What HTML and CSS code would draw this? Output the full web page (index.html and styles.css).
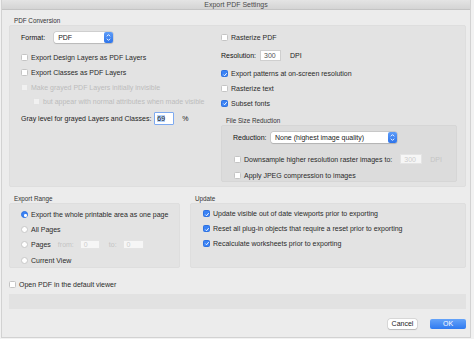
FILE: index.html
```html
<!DOCTYPE html>
<html>
<head>
<meta charset="utf-8">
<link rel="stylesheet" href="styles.css">
</head>
<body>
<div class="window">
  <div class="titlebar">Export PDF Settings</div>
  <div class="content">
    <div class="sec-label first">PDF Conversion</div>
    <div class="group conv">
      <div class="col-left">
        <div class="row format">
          <span class="lbl strong">Format:</span>
          <span class="select sel-format"><span class="sel-text">PDF</span><span class="stepper"><svg viewBox="0 0 9 11" width="9" height="11"><path d="M2.8 4.3 L4.5 2.6 L6.2 4.3 M2.8 6.7 L4.5 8.4 L6.2 6.7" fill="none" stroke="#fff" stroke-width="0.9"/></svg></span></span>
        </div>
        <div class="row r15 mt7"><span class="cb"></span><span class="txt">Export Design Layers as PDF Layers</span></div>
        <div class="row r15"><span class="cb"></span><span class="txt">Export Classes as PDF Layers</span></div>
        <div class="row r14 disabled"><span class="cb"></span><span class="txt">Make grayed PDF Layers initially invisible</span></div>
        <div class="row r14 disabled indent"><span class="cb"></span><span class="txt">but appear with normal attributes when made visible</span></div>
        <div class="row gray">
          <span class="lbl">Gray level for grayed Layers and Classes:</span>
          <span class="input focus"><span class="selected">69</span></span>
          <span class="lbl pct">%</span>
        </div>
      </div>
      <div class="col-right">
        <div class="row r14"><span class="cb"></span><span class="txt">Rasterize PDF</span></div>
        <div class="row r14 mt4 res">
          <span class="lbl strong">Resolution:</span>
          <span class="input res-in">300</span>
          <span class="lbl dpi">DPI</span>
        </div>
        <div class="row r15 mt4"><span class="cb on"><svg viewBox="0 0 7 7" width="7" height="7"><path d="M1.6 3.6 L3 5 L5.5 1.9" fill="none" stroke="#fff" stroke-width="1.1"/></svg></span><span class="txt">Export patterns at on-screen resolution</span></div>
        <div class="row r15"><span class="cb"></span><span class="txt">Rasterize text</span></div>
        <div class="row r14"><span class="cb on"><svg viewBox="0 0 7 7" width="7" height="7"><path d="M1.6 3.6 L3 5 L5.5 1.9" fill="none" stroke="#fff" stroke-width="1.1"/></svg></span><span class="txt">Subset fonts</span></div>
        <div class="sec-label inner-label">File Size Reduction</div>
        <div class="group inner">
          <div class="row reduction">
            <span class="lbl strong red-lbl">Reduction:</span>
            <span class="select sel-red"><span class="sel-text">None (highest image quality)</span><span class="stepper"><svg viewBox="0 0 9 11" width="9" height="11"><path d="M2.8 4.3 L4.5 2.6 L6.2 4.3 M2.8 6.7 L4.5 8.4 L6.2 6.7" fill="none" stroke="#fff" stroke-width="0.9"/></svg></span></span>
          </div>
          <div class="row r14 down">
            <span class="cb"></span><span class="txt">Downsample higher resolution raster images to:</span>
            <span class="input dis-in">300</span>
            <span class="lbl dis-txt dpi2">DPI</span>
          </div>
          <div class="row r14 jpeg"><span class="cb"></span><span class="txt">Apply JPEG compression to images</span></div>
        </div>
      </div>
    </div>

    <div class="bottom-groups">
      <div class="gcol range-col">
        <div class="sec-label second">Export Range</div>
        <div class="group range">
          <div class="row r15"><span class="radio on"></span><span class="txt">Export the whole printable area as one page</span></div>
          <div class="row r15"><span class="radio"></span><span class="txt">All Pages</span></div>
          <div class="row r15">
            <span class="radio"></span><span class="txt">Pages</span>
            <span class="dis-txt from">from:</span><span class="input dis-in pg1">0</span>
            <span class="dis-txt to">to:</span><span class="input dis-in pg2">0</span>
          </div>
          <div class="row r15 mt1"><span class="radio"></span><span class="txt">Current View</span></div>
        </div>
      </div>
      <div class="gcol update-col">
        <div class="sec-label second">Update</div>
        <div class="group update">
          <div class="row r15"><span class="cb on"><svg viewBox="0 0 7 7" width="7" height="7"><path d="M1.6 3.6 L3 5 L5.5 1.9" fill="none" stroke="#fff" stroke-width="1.1"/></svg></span><span class="txt">Update visible out of date viewports prior to exporting</span></div>
          <div class="row r15"><span class="cb on"><svg viewBox="0 0 7 7" width="7" height="7"><path d="M1.6 3.6 L3 5 L5.5 1.9" fill="none" stroke="#fff" stroke-width="1.1"/></svg></span><span class="txt">Reset all plug-in objects that require a reset prior to exporting</span></div>
          <div class="row r14"><span class="cb on"><svg viewBox="0 0 7 7" width="7" height="7"><path d="M1.6 3.6 L3 5 L5.5 1.9" fill="none" stroke="#fff" stroke-width="1.1"/></svg></span><span class="txt">Recalculate worksheets prior to exporting</span></div>
        </div>
      </div>
    </div>

    <div class="row r14 open"><span class="cb"></span><span class="txt">Open PDF in the default viewer</span></div>
    <div class="graybar"></div>
    <div class="buttons">
      <span class="btn cancel">Cancel</span>
      <span class="btn ok">OK</span>
    </div>
  </div>
</div>
</body>
</html>
```
FILE: styles.css
```css
* { box-sizing: border-box; }
html, body { margin: 0; padding: 0; }
body {
  background: #f2f2f2;
  width: 474px;
  height: 339px;
  overflow: hidden;
  font-family: "Liberation Sans", Arial, sans-serif;
  font-size: 7px;
  color: #2a2a2a;
}
.window {
  margin-left: 1px;
  width: 470px;
  height: 338px;
  background: #ececec;
  border-left: 1px solid #d2d2d2;
  border-right: 1px solid #d2d2d2;
  border-bottom: 1px solid #d2d2d2;
}
.titlebar {
  height: 10px;
  line-height: 9px;
  text-align: center;
  background: linear-gradient(#e4e4e4, #d4d4d4);
  border-bottom: 1px solid #c4c4c4;
  color: #4a4a4a;
  font-size: 7px;
}
.content {
  padding: 0 3px 0 7px;
}
.sec-label {
  height: 9px;
  line-height: 9px;
  font-size: 6.3px;
  color: #333;
  padding-left: 5px;
}
.sec-label.first { margin-top: 6px; }
.sec-label.second { margin-top: 7px; }
.group {
  background: #e3e3e3;
  border: 1px solid #dedede;
  border-radius: 2px;
}
.conv {
  height: 162px;
  width: 457px;
  display: grid;
  grid-template-columns: 211px 1fr;
}
.col-left { padding: 6px 0 0 11px; }
.col-right { padding: 4px 10px 0 0; }
.row {
  display: flex;
  align-items: center;
  white-space: nowrap;
}
.r15 { height: 15px; }
.r14 { height: 14px; }
.mt7 { margin-top: 7px; }
.mt4 { margin-top: 4px; }
.mt1 { margin-top: 1px; }
.format { height: 11px; }
.lbl { color: #222; }
.strong { color: #111; }
.cb {
  width: 7px;
  height: 7px;
  border-radius: 1.5px;
  background: #fff;
  border: 0.5px solid #c4c4c4;
  margin-right: 3px;
  flex: none;
  display: flex;
}
.cb.on {
  background: #3a82f5;
  border-color: #2f72e0;
}
.cb svg { display: block; margin: -0.5px; }
.disabled .txt { color: #bcbcbc; }
.disabled .cb { background: #f1f1f1; border-color: #e2e2e2; }
.indent { padding-left: 12px; }
.gray { height: 14px; margin-top: 3px; }
.select {
  display: flex;
  align-items: center;
  height: 11px;
  background: #fff;
  border-radius: 2px;
  box-shadow: 0 0 0 0.5px rgba(0,0,0,0.15), 0 0.5px 1px rgba(0,0,0,0.12);
  justify-content: space-between;
}
.sel-text { padding-left: 4px; color: #222; }
.stepper {
  width: 9px;
  height: 11px;
  border-radius: 2px;
  background: linear-gradient(#5d9cf8, #2e74ea);
  display: block;
}
.stepper svg { display: block; }
.sel-format { margin-left: 9px; width: 59px; }
.input {
  display: inline-flex;
  align-items: center;
  background: #fff;
  border: 0.5px solid #cfcfcf;
  padding-left: 3px;
  color: #555;
  height: 11px;
}
.input.focus {
  margin-left: 3px;
  width: 20px;
  height: 13px;
  border: 1.5px solid #7eaaf0;
  border-radius: 1px;
  padding-left: 2px;
  color: #222;
}
.selected { background: #b4d2fa; }
.pct { margin-left: 8px; }
.res-in { margin-left: 4px; width: 21px; }
.dpi { margin-left: 9px; }
.inner-label { margin-top: 6px; }
.inner {
  height: 57px;
  width: 236px;
  background: #dcdcdc;
  border-color: #d6d6d6;
}
.reduction { height: 11px; margin-top: 6px; padding-left: 11px; }
.red-lbl { width: 38px; }
.sel-red { width: 126px; }
.down { margin-top: 9px; padding-left: 12px; }
.jpeg { margin-top: 2px; padding-left: 12px; }
.dis-in {
  background: #f6f6f6;
  border-color: #e4e4e4;
  color: #cdcdcd;
  height: 10px;
  width: 22px;
}
.down .dis-in { margin-left: 8px; }
.dis-txt { color: #c4c4c4; }
.dpi2 { margin-left: 8px; }
.bottom-groups {
  display: flex;
  gap: 10px;
}
.range-col { width: 171px; }
.update-col { width: 276px; }
.range { height: 65px; padding: 3px 0 0 11px; }
.update { height: 65px; padding: 2px 0 0 12px; }
.radio {
  width: 7px;
  height: 7px;
  border-radius: 50%;
  background: #fff;
  border: 0.5px solid #c8c8c8;
  margin-right: 3px;
  flex: none;
  position: relative;
}
.radio.on {
  background: #3a82f5;
  border-color: #2f72e0;
}
.radio.on::after {
  content: "";
  position: absolute;
  left: 2px;
  top: 2px;
  width: 2.5px;
  height: 2.5px;
  border-radius: 50%;
  background: #fff;
}
.from { margin-left: 7px; }
.pg1 { margin-left: 6px; width: 20px; height: 9px; }
.to { margin-left: 9px; }
.pg2 { margin-left: 6px; width: 21px; height: 9px; }
.open { margin-top: 9px; }
.graybar {
  margin-top: 3px;
  height: 15px;
  width: 457px;
  background: #e2e2e2;
}
.buttons {
  margin-top: 10px;
  width: 457px;
  display: flex;
  justify-content: flex-end;
  gap: 13px;
}
.btn {
  height: 10px;
  line-height: 10px;
  text-align: center;
  border-radius: 2px;
  font-size: 7px;
}
.cancel {
  width: 29px;
  background: #fff;
  color: #222;
  box-shadow: 0 0 0 0.5px rgba(0,0,0,0.15), 0 0.5px 1px rgba(0,0,0,0.15);
}
.ok {
  width: 36px;
  background: linear-gradient(#65a3f9, #2f7af0);
  color: #fff;
}
```
